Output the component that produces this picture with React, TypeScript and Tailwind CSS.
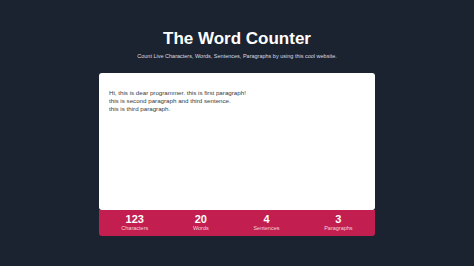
export default function App() {
  const stats = [
    { n: "123", label: "Characters" },
    { n: "20", label: "Words" },
    { n: "4", label: "Sentences" },
    { n: "3", label: "Paragraphs" },
  ];
  return (
    <div
      className="w-[474px] h-[266px] bg-[#1c2330] flex flex-col items-center pt-[29px]"
      style={{ fontFamily: '"Liberation Sans", Arial, sans-serif' }}
    >
      <h1 className="text-white font-bold text-[17px] leading-[20px]">The Word Counter</h1>
      <p className="text-[#d8dce2] text-[5.5px] leading-[8px] mt-[3px]">
        Count Live Characters, Words, Sentences, Paragraphs by using this cool website.
      </p>
      <div className="w-[276px] mt-[13px] flex flex-col">
        <div className="bg-white h-[137px] rounded-[3px] px-[10px] pt-[16px] text-[#3a3a3a] text-[6.2px] leading-[8px]">
          <p>Hi, this is dear programmer. this is first paragraph!</p>
          <p>this is second paragraph and third sentence.</p>
          <p>this is third paragraph.</p>
        </div>
        <div className="bg-[#c21f50] h-[26px] rounded-b-[3px] flex justify-around items-center">
          {stats.map((s) => (
            <div key={s.label} className="flex flex-col items-center text-white">
              <span className="font-bold text-[11px] leading-[11px]">{s.n}</span>
              <span className="text-[5.5px] leading-[7px] text-[#f3d0da]">{s.label}</span>
            </div>
          ))}
        </div>
      </div>
    </div>
  );
}
